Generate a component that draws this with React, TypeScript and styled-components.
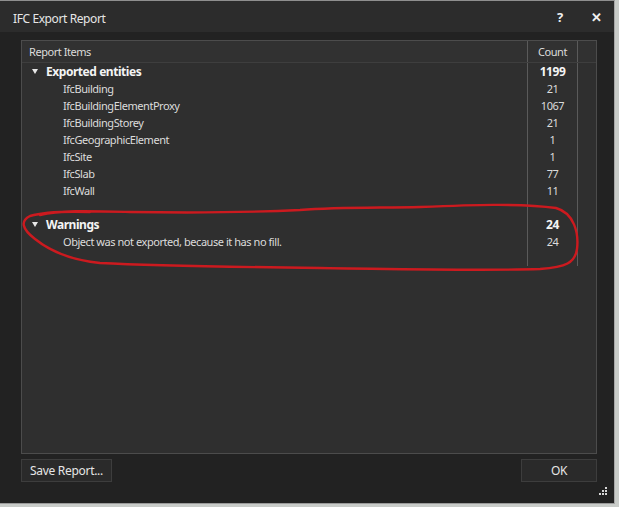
import React from "react";
import styled, { createGlobalStyle } from "styled-components";

const Global = createGlobalStyle`
  html, body { margin: 0; padding: 0; background: #c9ccc9; }
  body { width: 619px; height: 507px; overflow: hidden; font-family: "Noto Sans", "Open Sans", sans-serif; }
  * { box-sizing: border-box; }
`;

const Window = styled.div`
  position: relative;
  width: 615px;
  height: 504px;
  background: #222222;
  border-top: 1px solid #8f8f8f;
  border-right: 1px solid #a8a8a8;
  border-bottom: 1px solid #9a9a9a;
  display: flex;
  flex-direction: column;
  color: #e2e2e2;
  font-size: 11px;
  letter-spacing: -0.45px;
`;

const TitleBar = styled.div`
  height: 31px;
  background: #2c2c2c;
  display: flex;
  align-items: center;
  padding-left: 13px;
  flex-shrink: 0;
`;

const Title = styled.div`
  flex: 1;
  font-size: 12px;
  letter-spacing: -0.4px;
  color: #e6e6e6;
  padding-top: 3px;
`;

const TitleButton = styled.div`
  width: 36px;
  height: 31px;
  display: flex;
  align-items: center;
  justify-content: center;
  color: #f0f0f0;
  font-weight: 700;
  font-size: 13px;
`;

const Body = styled.div`
  flex: 1;
  display: flex;
  flex-direction: column;
  padding: 8px 17px 0 21px;
`;

const ListPanel = styled.div`
  height: 414px;
  background: #2f2f2f;
  border: 1px solid #4c4c4c;
  display: flex;
  flex-direction: column;
`;

const Row = styled.div<{ $header?: boolean }>`
  display: flex;
  height: ${(p) => (p.$header ? "22px" : "17px")};
  align-items: stretch;
  ${(p) => (p.$header ? "border-bottom: 1px solid #3e3e3e; background: #313131;" : "")}
`;

const NameCell = styled.div<{ $indent: number; $bold?: boolean }>`
  flex: 1;
  display: flex;
  align-items: center;
  padding-left: ${(p) => p.$indent}px;
  font-weight: ${(p) => (p.$bold ? 700 : 400)};
  font-size: ${(p) => (p.$bold ? "12px" : "11px")};
  color: ${(p) => (p.$bold ? "#f4f4f4" : "#dcdcdc")};
  white-space: nowrap;
`;

const CountCell = styled.div<{ $bold?: boolean }>`
  width: 51px;
  border-left: 1px solid #5a5a5a;
  border-right: 1px solid #5a5a5a;
  display: flex;
  align-items: center;
  justify-content: center;
  font-weight: ${(p) => (p.$bold ? 700 : 400)};
  font-size: ${(p) => (p.$bold ? "12px" : "11px")};
  color: ${(p) => (p.$bold ? "#f4f4f4" : "#dcdcdc")};
`;

const Filler = styled.div`
  width: 18px;
`;

const Tri = styled.span`
  width: 0;
  height: 0;
  border-left: 3px solid transparent;
  border-right: 3px solid transparent;
  border-top: 5px solid #e8e8e8;
  margin-right: 8px;
`;

const RowSpacer = styled(Row)`
  height: 16px;
`;

const Footer = styled.div`
  display: flex;
  justify-content: space-between;
  padding-top: 5px;
`;

const Button = styled.div<{ $w: number }>`
  width: ${(p) => p.$w}px;
  height: 23px;
  background: #2a2a2a;
  border: 1px solid #3d3d3d;
  display: flex;
  align-items: center;
  justify-content: center;
  color: #e6e6e6;
  font-size: 12px;
  letter-spacing: -0.3px;
`;

const Grip = styled.svg`
  position: absolute;
  right: 6px;
  bottom: 7px;
`;

const Annotation = styled.svg`
  position: absolute;
  left: 0;
  top: 0;
  pointer-events: none;
`;

const items = [
  ["IfcBuilding", "21"],
  ["IfcBuildingElementProxy", "1067"],
  ["IfcBuildingStorey", "21"],
  ["IfcGeographicElement", "1"],
  ["IfcSite", "1"],
  ["IfcSlab", "77"],
  ["IfcWall", "11"],
];

export default function App() {
  return (
    <>
      <Global />
      <Window>
        <TitleBar>
          <Title>IFC Export Report</Title>
          <TitleButton>?</TitleButton>
          <TitleButton>✕</TitleButton>
        </TitleBar>
        <Body>
          <ListPanel>
            <Row $header>
              <NameCell $indent={7}>Report Items</NameCell>
              <CountCell>Count</CountCell>
              <Filler />
            </Row>
            <Row>
              <NameCell $indent={10} $bold>
                <Tri />
                Exported entities
              </NameCell>
              <CountCell $bold>1199</CountCell>
              <Filler />
            </Row>
            {items.map(([n, c]) => (
              <Row key={n}>
                <NameCell $indent={41}>{n}</NameCell>
                <CountCell>{c}</CountCell>
                <Filler />
              </Row>
            ))}
            <Row>
              <NameCell $indent={41} />
              <CountCell />
              <Filler />
            </Row>
            <Row>
              <NameCell $indent={10} $bold>
                <Tri />
                Warnings
              </NameCell>
              <CountCell $bold>24</CountCell>
              <Filler />
            </Row>
            <Row>
              <NameCell $indent={41}>Object was not exported, because it has no fill.</NameCell>
              <CountCell>24</CountCell>
              <Filler />
            </Row>
            <RowSpacer>
              <NameCell $indent={41} />
              <CountCell />
              <Filler />
            </RowSpacer>
          </ListPanel>
          <Footer>
            <Button $w={91}>Save Report...</Button>
            <Button $w={76}>OK</Button>
          </Footer>
        </Body>
        <Grip width="9" height="9" viewBox="0 0 9 9">
          <g fill="#d8d8d8">
            <rect x="6" y="0" width="2" height="2" />
            <rect x="3" y="3" width="2" height="2" />
            <rect x="6" y="3" width="2" height="2" />
            <rect x="0" y="6" width="2" height="2" />
            <rect x="3" y="6" width="2" height="2" />
            <rect x="6" y="6" width="2" height="2" />
          </g>
        </Grip>
        <Annotation width="619" height="507" viewBox="0 0 619 507">
          <path
            d="M 40 214 C 60 209, 90 210, 130 211 C 200 212, 260 211, 300 209 C 340 206, 380 207, 420 206 C 470 204, 520 202, 556 207 C 574 212, 579 232, 577 248 C 575 262, 566 266, 540 268 C 480 270, 400 268, 320 267 C 240 266, 160 265, 100 262 C 70 259, 50 250, 35 238 C 22 228, 20 220, 30 215 C 40 212, 60 210, 90 211"
            fill="none"
            stroke="#cc1a1f"
            strokeWidth="2.4"
            strokeLinecap="round"
          />
        </Annotation>
      </Window>
    </>
  );
}
